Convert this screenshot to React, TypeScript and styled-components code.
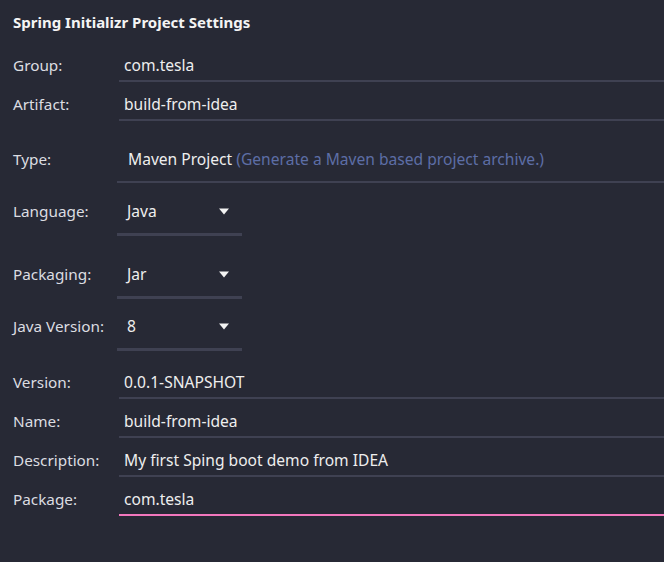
import React from 'react';
import styled, { createGlobalStyle } from 'styled-components';

const GlobalStyle = createGlobalStyle`
  html, body {
    margin: 0;
    padding: 0;
    background: #272935;
  }
  body {
    font-family: 'Noto Sans', 'Segoe UI', sans-serif;
    -webkit-font-smoothing: antialiased;
  }
`;

type FieldKind = 'text' | 'type' | 'select';

type Setting = {
  label: string;
  value: string;
  kind: FieldKind;
  gap: number;
  hint?: string;
  focused?: boolean;
};

const settings: Setting[] = [
  { label: 'Group:', value: 'com.tesla', kind: 'text', gap: 18 },
  { label: 'Artifact:', value: 'build-from-idea', kind: 'text', gap: 7 },
  {
    label: 'Type:',
    value: 'Maven Project',
    kind: 'type',
    gap: 15,
    hint: '(Generate a Maven based project archive.)',
  },
  { label: 'Language:', value: 'Java', kind: 'select', gap: 6 },
  { label: 'Packaging:', value: 'Jar', kind: 'select', gap: 16 },
  { label: 'Java Version:', value: '8', kind: 'select', gap: 5 },
  { label: 'Version:', value: '0.0.1-SNAPSHOT', kind: 'text', gap: 16 },
  { label: 'Name:', value: 'build-from-idea', kind: 'text', gap: 7 },
  { label: 'Description:', value: 'My first Sping boot demo from IDEA', kind: 'text', gap: 7 },
  { label: 'Package:', value: 'com.tesla', kind: 'text', gap: 7, focused: true },
];

function Arrow() {
  return (
    <svg width="10" height="7" viewBox="0 0 10 7">
      <polygon points="0,0.5 10,0.5 5,6.5" fill="#f2f2f2" />
    </svg>
  );
}

function SettingRow({ setting }: { setting: Setting }) {
  const line = setting.kind === 'select' ? 3 : 2;
  return (
    <Row $gap={setting.gap}>
      <Label $line={line}>{setting.label}</Label>
      {setting.kind === 'text' && (
        <TextField $focused={!!setting.focused}>{setting.value}</TextField>
      )}
      {setting.kind === 'type' && (
        <TypeField>
          {setting.value} <Hint>{setting.hint}</Hint>
        </TypeField>
      )}
      {setting.kind === 'select' && (
        <SelectField>
          <span>{setting.value}</span>
          <Arrow />
        </SelectField>
      )}
    </Row>
  );
}

export default function App() {
  return (
    <>
      <GlobalStyle />
      <Panel>
        <Title>Spring Initializr Project Settings</Title>
        {settings.map((s) => (
          <SettingRow key={s.label} setting={s} />
        ))}
      </Panel>
    </>
  );
}

const Panel = styled.div`
  height: 562px;
  box-sizing: border-box;
  padding: 12px 0 0 13px;
  overflow: hidden;
  color: #e4e5e8;
`;

const Title = styled.h1`
  margin: 0;
  font-size: 15px;
  line-height: 20px;
  font-weight: 700;
  color: #f4f4f4;
`;

const Row = styled.div<{ $gap: number }>`
  display: flex;
  align-items: center;
  margin-top: ${(p) => p.$gap}px;
`;

const Label = styled.div<{ $line: number }>`
  width: 104px;
  flex-shrink: 0;
  font-size: 15.3px;
  padding-bottom: ${(p) => p.$line}px;
  color: #dcdde1;
`;

const TextField = styled.div<{ $focused: boolean }>`
  flex: 1;
  margin-left: 2px;
  height: 32px;
  box-sizing: border-box;
  padding-left: 5px;
  display: flex;
  align-items: center;
  font-size: 15.6px;
  color: #eeeeee;
  border-bottom: 2px solid ${(p) => (p.$focused ? '#f277bd' : '#3f4152')};
`;

const TypeField = styled.div`
  flex: 1;
  height: 47px;
  box-sizing: border-box;
  padding-left: 11px;
  display: flex;
  align-items: center;
  font-size: 15.6px;
  color: #eeeeee;
  white-space: pre;
  border-bottom: 2px solid #3f4152;
`;

const Hint = styled.span`
  color: #5d6ea6;
`;

const SelectField = styled.div`
  width: 125px;
  height: 47px;
  box-sizing: border-box;
  padding: 0 13px 0 10px;
  display: flex;
  align-items: center;
  justify-content: space-between;
  font-size: 15.6px;
  color: #eeeeee;
  border-bottom: 3px solid #3f4152;
`;
